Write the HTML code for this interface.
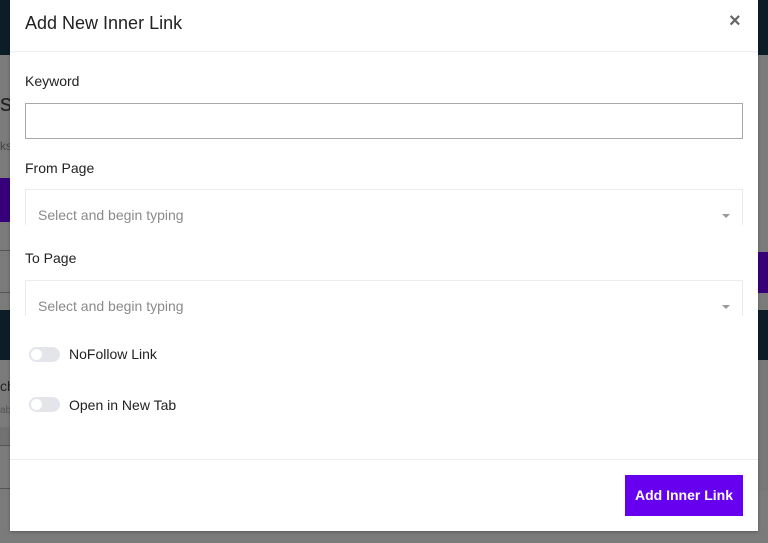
<!DOCTYPE html>
<html><head><meta charset="utf-8"><style>
*{box-sizing:border-box;margin:0;padding:0}
body{width:768px;height:543px;overflow:hidden;background:#7b7b7b;font-family:"Liberation Sans","DejaVu Sans",sans-serif;position:relative}
.a{position:absolute}
.modal{position:absolute;left:10px;top:0;width:748px;height:531px;background:#fff;box-shadow:0 1px 3px rgba(0,0,0,.3)}
.lbl{position:absolute;left:15px;font-size:14px;color:#222}
.sel{position:absolute;left:15px;width:718px;height:36px;border:1px solid #ececec;border-bottom:none}
.sel span{position:absolute;left:12px;top:17px;font-size:14px;color:#8a8a8a}
.sel i{position:absolute;right:12px;top:24px;border-left:4px solid transparent;border-right:4px solid transparent;border-top:4px solid #999}
.tg{position:absolute;left:19px;width:31px;height:15px;border-radius:8px;background:#e3e5ea}
.tg:after{content:"";position:absolute;left:2px;top:2px;width:11px;height:11px;border-radius:50%;background:#fff}
.tl{position:absolute;left:59px;font-size:14px;color:#222}
</style></head><body>
<div class="a" style="left:0;top:0;width:768px;height:55px;background:#0d1d28"></div>
<div class="a" style="left:0;top:90px;font-size:24px;color:#222">s</div>
<div class="a" style="left:0;top:139px;font-size:12px;color:#444">ks</div>
<div class="a" style="left:0;top:178px;width:12px;height:44px;background:#37007a"></div>
<div class="a" style="left:0;top:250px;width:12px;height:1px;background:#555"></div>
<div class="a" style="left:0;top:292px;width:12px;height:1px;background:#555"></div>
<div class="a" style="left:0;top:310px;width:12px;height:50px;background:#0d1d28"></div>
<div class="a" style="left:0;top:378px;font-size:14px;color:#222">ch</div>
<div class="a" style="left:0;top:405px;font-size:10px;color:#555">ab</div>
<div class="a" style="left:0;top:427px;width:12px;height:18px;background:#727272"></div>
<div class="a" style="left:0;top:445px;width:12px;height:1px;background:#555"></div>
<div class="a" style="left:0;top:488px;width:12px;height:1px;background:#555"></div>
<div class="a" style="left:756px;top:252px;width:12px;height:41px;background:#37007a"></div>
<div class="a" style="left:756px;top:310px;width:12px;height:50px;background:#0d1d28"></div>
<div class="a" style="left:756px;top:360px;width:12px;height:131px;background:#787878"></div>
<div class="modal">
<div class="a" style="left:15px;top:13px;font-size:18px;color:#222">Add New Inner Link</div>
<div class="a" style="left:719px;top:10px;font-size:20px;color:#666;font-weight:bold">×</div>
<div class="a" style="left:0;top:51px;width:748px;height:1px;background:#eee"></div>
<div class="lbl" style="top:73px">Keyword</div>
<div class="a" style="left:15px;top:103px;width:718px;height:36px;border:1px solid #aaa"></div>
<div class="lbl" style="top:160px">From Page</div>
<div class="sel" style="top:189px"><span>Select and begin typing</span><i></i></div>
<div class="lbl" style="top:250px">To Page</div>
<div class="sel" style="top:280px"><span>Select and begin typing</span><i></i></div>
<div class="tg" style="top:347px"></div><div class="tl" style="top:346px">NoFollow Link</div>
<div class="tg" style="top:397px"></div><div class="tl" style="top:397px">Open in New Tab</div>
<div class="a" style="left:0;top:459px;width:748px;height:1px;background:#eee"></div>
<div class="a" style="left:615px;top:475px;width:118px;height:41px;background:#6600ee;color:#fff;font-size:14px;font-weight:bold;text-align:center;line-height:41px">Add Inner Link</div>
</div>
</body></html>
